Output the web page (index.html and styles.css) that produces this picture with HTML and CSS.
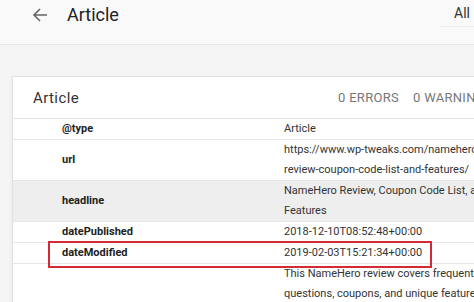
FILE: index.html
```html
<!DOCTYPE html>
<html lang="en">
<head>
    <meta charset="UTF-8">
    <meta name="viewport" content="width=device-width, initial-scale=1.0">
    <title>Article</title>
    <link rel="stylesheet" href="styles.css">
</head>
<body>
    <header class="topbar">
        <svg class="back" width="16" height="16" viewBox="0 0 16 16">
            <path d="M15 8H2M8 2L2 8l6 6" fill="none" stroke="#666" stroke-width="1.6"/>
        </svg>
        <h1>Article</h1>
        <div class="filter">All</div>
    </header>
    <main class="content">
        <section class="card">
            <div class="card-head">
                <h2>Article</h2>
                <div class="counts">
                    <span>0 Errors</span>
                    <span>0 Warnings</span>
                </div>
            </div>
            <div class="row">
                <div class="key">@type</div>
                <div class="value">Article</div>
            </div>
            <div class="row">
                <div class="key">url</div>
                <div class="value">https://www.wp-tweaks.com/namehero-review-coupon-code-list-and-features/</div>
            </div>
            <div class="row selected">
                <div class="key">headline</div>
                <div class="value">NameHero Review, Coupon Code List, and Features</div>
            </div>
            <div class="row">
                <div class="key">datePublished</div>
                <div class="value">2018-12-10T08:52:48+00:00</div>
            </div>
            <div class="row marked">
                <div class="key">dateModified</div>
                <div class="value">2019-02-03T15:21:34+00:00</div>
            </div>
            <div class="row">
                <div class="key">description</div>
                <div class="value">This NameHero review covers frequent questions, coupons, and unique features of the host that you should know about before you sign up. Find out whether it is the right web host for your WordPress site and how it compares.</div>
            </div>
        </section>
    </main>
</body>
</html>
```

FILE: styles.css
```css
*{
    box-sizing: border-box;
    margin: 0;
    font-family: Roboto, 'Liberation Sans', sans-serif;
}

html, body{
    height: 100%;
    overflow: hidden;
}

body{
    background-color: #f5f5f5;
    color: #222;
}

.topbar{
    height: 45px;
    display: flex;
    align-items: center;
    padding: 0 0 15px 32px;
    background-color: #f9f9f9;
    border-bottom: 1px solid #e8e8e8;
}

.topbar .back{
    flex: none;
    margin-right: 19px;
}

.topbar h1{
    font-size: 18px;
    font-weight: 400;
    color: #222;
}

.filter{
    margin-left: auto;
    width: 34px;
    padding: 2px 0 5px 14px;
    font-size: 14px;
    color: #333;
    border-bottom: 1px solid #ececec;
}

.content{
    padding: 31px 0 0 12px;
}

.card{
    width: 560px;
    background-color: #fff;
    border: 1px solid #e2e2e2;
    box-shadow: 0 1px 3px rgba(0, 0, 0, 0.08);
}

.card-head{
    height: 42px;
    display: flex;
    align-items: center;
    padding: 0 0 0 20px;
    border-bottom: 1px solid #e4e4e4;
}

.card-head h2{
    font-size: 15px;
    font-weight: 400;
    color: #333;
    letter-spacing: 0.4px;
}

.counts{
    margin-left: auto;
    width: 233px;
    display: flex;
    gap: 14px;
    font-size: 13px;
    color: #777;
    text-transform: uppercase;
    letter-spacing: 0.3px;
}

.row{
    position: relative;
    display: grid;
    grid-template-columns: 222px 220px;
    padding-left: 49px;
    line-height: 20px;
    font-size: 11px;
    border-bottom: 1px solid #e6e6e6;
}

.row.selected{
    background-color: #eeeeee;
}

.key{
    align-self: center;
    font-weight: 700;
    color: #222;
}

.value{
    color: #333;
}

.row.marked::after{
    content: "";
    position: absolute;
    left: 35px;
    top: -2px;
    width: 380px;
    height: 23px;
    border: 2px solid #d42a34;
}
```
